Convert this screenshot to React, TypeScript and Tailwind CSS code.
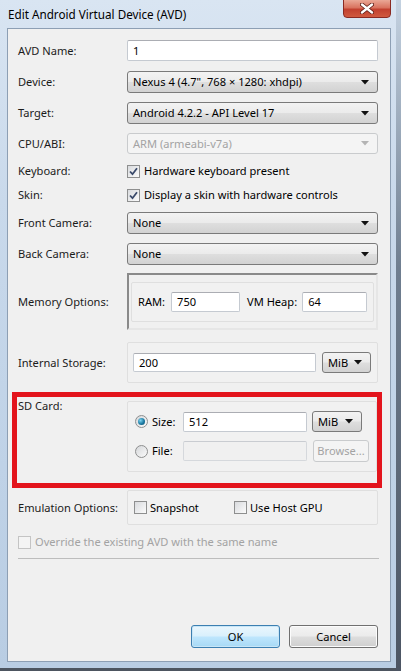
import type { ReactNode } from 'react';

const font = "font-['Noto_Sans',sans-serif] text-[11.1px] leading-[16px]";

function Field({ value = '', className = '', disabled = false }: { value?: string; className?: string; disabled?: boolean }) {
  return (
    <div
      className={`flex items-center rounded-[2px] border border-[#c5cad1] border-t-[#abadb3] pl-[5px] ${
        disabled ? 'bg-[#f0f0f0] border-[#d5d8dc] border-t-[#c9ccd1]' : 'bg-white'
      } ${className}`}
    >
      <span className="text-black">{value}</span>
    </div>
  );
}

function Arrow({ disabled = false }: { disabled?: boolean }) {
  return (
    <svg width="8" height="5" viewBox="0 0 8 5" className="shrink-0">
      <path d="M0 0 H8 L4 4.5 Z" fill={disabled ? '#b4b4b4' : '#111'} />
    </svg>
  );
}

function Combo({ value, className = '', disabled = false }: { value: string; className?: string; disabled?: boolean }) {
  return (
    <div
      className={`flex items-center justify-between rounded-[3px] border pl-[5px] pr-[8px] ${
        disabled
          ? 'border-[#c9cbcd] bg-[#f4f4f4] text-[#a3a3a3]'
          : 'border-[#7a7a7a] bg-[linear-gradient(#f3f3f3_0%,#ebebeb_48%,#dedede_52%,#d2d2d2_100%)] text-black'
      } ${className}`}
    >
      <span className="whitespace-nowrap">{value}</span>
      <Arrow disabled={disabled} />
    </div>
  );
}

function Check({ checked = false, disabled = false }: { checked?: boolean; disabled?: boolean }) {
  return (
    <div
      className={`flex h-[13px] w-[13px] shrink-0 items-center justify-center border ${
        disabled ? 'border-[#c4c4c4] bg-[#f4f4f4]' : 'border-[#8e8f8f] bg-[linear-gradient(135deg,#d9dbde,#fbfbfb)]'
      }`}
    >
      {checked && (
        <svg width="9" height="9" viewBox="0 0 9 9">
          <path d="M1 4.5 L3.5 7.2 L8 1.2" fill="none" stroke="#3a4a6b" strokeWidth="1.8" />
        </svg>
      )}
    </div>
  );
}

function Radio({ checked = false }: { checked?: boolean }) {
  return (
    <div className="flex h-[13px] w-[13px] shrink-0 items-center justify-center rounded-full border border-[#8e8f8f] bg-[linear-gradient(135deg,#d5d7da,#fbfbfb)]">
      {checked && <div className="h-[7px] w-[7px] rounded-full bg-[radial-gradient(circle_at_35%_35%,#7fd3ef,#1b7aa2_55%,#0d4a68)]" />}
    </div>
  );
}

function Button({ children, primary = false, disabled = false, className = '' }: { children: ReactNode; primary?: boolean; disabled?: boolean; className?: string }) {
  return (
    <div
      className={`flex items-center justify-center whitespace-nowrap rounded-[3px] border ${
        disabled
          ? 'border-[#c9cbcd] bg-[#f4f4f4] text-[#a3a3a3]'
          : primary
          ? 'border-[#3c7fb1] bg-[linear-gradient(#eaf6fd_0%,#d9f0fc_48%,#bee6fd_52%,#a7d9f5_100%)] shadow-[inset_0_0_0_1px_#c8e6f7] text-black'
          : 'border-[#707070] bg-[linear-gradient(#f3f3f3_0%,#ebebeb_48%,#dddddd_52%,#cfcfcf_100%)] shadow-[inset_0_0_0_1px_#fcfcfc] text-black'
      } ${className}`}
    >
      {children}
    </div>
  );
}

function Row({ label, children, className = '' }: { label: string; children: ReactNode; className?: string }) {
  return (
    <div className={`flex items-center ${className}`}>
      <div className="w-[109px] shrink-0 whitespace-nowrap text-[#1b1b1b]">{label}</div>
      {children}
    </div>
  );
}

function Panel({ children, className = '' }: { children: ReactNode; className?: string }) {
  return <div className={`rounded-[2px] border border-[#dfdfdf] bg-[#f1f1f1] ${className}`}>{children}</div>;
}

export default function App() {
  return (
    <div className={`flex h-[671px] w-[401px] overflow-hidden bg-[#4d5560] ${font}`}>
      <div className="flex h-[668px] w-[396px] flex-col bg-[linear-gradient(180deg,#d9e5f2_0%,#c9d9eb_30%,#bfd2e7_70%,#b9cde3_100%)]">
        {/* title bar */}
        <div className="relative flex h-[28px] items-center pl-[8px]">
          <span className="text-[11.7px] text-black">Edit Android Virtual Device (AVD)</span>
          <div className="absolute right-[5px] top-[-1px] flex h-[19px] w-[48px] items-center justify-center rounded-b-[4px] border border-[#8a2a22] bg-[linear-gradient(#eaa896_0%,#d9735f_45%,#c2412f_55%,#d05a3f_100%)]">
            <svg width="14" height="11" viewBox="0 0 14 11">
              <path d="M2 1.5 L12 9.5 M12 1.5 L2 9.5" stroke="#5a1a12" strokeWidth="4" strokeLinecap="round" />
              <path d="M2 1.5 L12 9.5 M12 1.5 L2 9.5" stroke="#fff" strokeWidth="2.4" strokeLinecap="round" />
            </svg>
          </div>
        </div>

        {/* client area */}
        <div className="ml-[7px] flex h-[634px] w-[384px] flex-col border border-[#8d9fb4] bg-[#f0f0f0] pl-[10px] pt-[11px]">
          <Row label="AVD Name:">
            <Field value="1" className="h-[21px] w-[251px]" />
          </Row>
          <Row label="Device:" className="mt-[10px]">
            <Combo value={'Nexus 4 (4.7", 768 \u00d7 1280: xhdpi)'} className="h-[22px] w-[251px]" />
          </Row>
          <Row label="Target:" className="mt-[9px]">
            <Combo value="Android 4.2.2 - API Level 17" className="h-[22px] w-[251px]" />
          </Row>
          <Row label="CPU/ABI:" className="mt-[9px]">
            <Combo value="ARM (armeabi-v7a)" disabled className="h-[21px] w-[251px]" />
          </Row>
          <Row label="Keyboard:" className="mt-[5px] h-[24px]">
            <Check checked />
            <span className="ml-[4px] whitespace-nowrap">Hardware keyboard present</span>
          </Row>
          <Row label="Skin:" className="h-[24px]">
            <Check checked />
            <span className="ml-[4px] whitespace-nowrap">Display a skin with hardware controls</span>
          </Row>
          <Row label="Front Camera:" className="mt-[5px]">
            <Combo value="None" className="h-[22px] w-[251px]" />
          </Row>
          <Row label="Back Camera:" className="mt-[9px]">
            <Combo value="None" className="h-[22px] w-[251px]" />
          </Row>

          <Row label="Memory Options:" className="mt-[8px]">
            <div className="flex h-[57px] w-[251px] items-center border-[2px] border-[#8a8a8a] border-b-[#e6e6e6] border-r-[#e6e6e6] pl-[2px] pr-[2px]">
              <Panel className="flex h-[40px] w-full items-center pl-[6px]">
                <span className="whitespace-nowrap">RAM:</span>
                <Field value="750" className="ml-[6px] h-[20px] w-[69px]" />
                <span className="ml-[7px] whitespace-nowrap">VM Heap:</span>
                <Field value="64" className="ml-[5px] h-[20px] w-[65px]" />
              </Panel>
            </div>
          </Row>

          <Row label="Internal Storage:" className="mt-[12px]">
            <Panel className="flex h-[41px] w-[251px] items-center pl-[5px]">
              <Field value="200" className="h-[19px] w-[183px]" />
              <Combo value="MiB" className="ml-[6px] h-[21px] w-[49px] pr-[6px]" />
            </Panel>
          </Row>

          {/* highlighted SD card section */}
          <div className="ml-[-6px] mt-[9px] flex h-[96px] w-[370px] items-start border-[5px] border-[#e3141c] pl-[1px] pt-[1px]">
            <div className="w-[109px] shrink-0 text-[#1b1b1b]">SD Card:</div>
            <Panel className="mt-[3px] flex h-[71px] w-[251px] flex-col justify-center gap-[8px] pl-[7px]">
              <div className="flex items-center">
                <Radio checked />
                <span className="ml-[4px] w-[31px]">Size:</span>
                <Field value="512" className="h-[20px] w-[124px]" />
                <Combo value="MiB" className="ml-[5px] h-[21px] w-[50px] pr-[6px]" />
              </div>
              <div className="flex items-center">
                <Radio />
                <span className="ml-[4px] w-[31px]">File:</span>
                <Field disabled className="h-[20px] w-[124px]" />
                <Button disabled className="ml-[6px] h-[22px] w-[56px]">
                  Browse...
                </Button>
              </div>
            </Panel>
          </div>

          <Row label="Emulation Options:" className="mt-[2px]">
            <Panel className="flex h-[35px] w-[251px] items-center pl-[6px]">
              <Check />
              <span className="ml-[3px] w-[84px]">Snapshot</span>
              <Check />
              <span className="ml-[3px] whitespace-nowrap">Use Host GPU</span>
            </Panel>
          </Row>

          <div className="mt-[8px] flex h-[18px] items-center text-[#a3a3a3]">
            <Check disabled />
            <span className="ml-[4px] whitespace-nowrap">Override the existing AVD with the same name</span>
          </div>

          <div className="mt-[7px] h-[1px] w-[361px] bg-[#bdbdbd]" />

          <div className="mt-[66px] flex w-[360px] justify-end gap-[9px]">
            <Button primary className="h-[23px] w-[89px]">
              OK
            </Button>
            <Button className="h-[23px] w-[89px]">Cancel</Button>
          </div>
        </div>
      </div>
      <div className="h-full w-[5px] bg-[linear-gradient(180deg,#c4d2e1,#6f7e90_40%,#4c5563)]" />
    </div>
  );
}
